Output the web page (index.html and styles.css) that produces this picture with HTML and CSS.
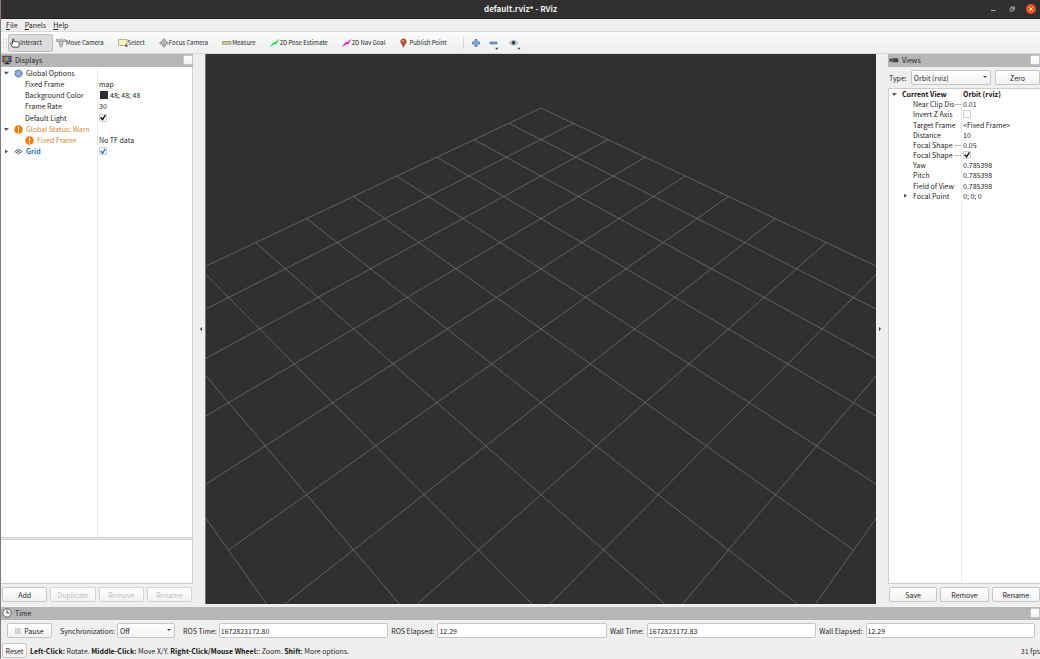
FILE: index.html
```html
<!DOCTYPE html>
<html lang="en">
<head>
    <meta charset="UTF-8">
    <meta name="viewport" content="width=device-width, initial-scale=1.0">
    <title>default.rviz* - RViz</title>
    <link rel="stylesheet" href="styles.css">
</head>
<body>
    <header class="titlebar">
        <h1>default.rviz* - RViz</h1>
        <div class="window-buttons">
            <button type="button" aria-label="Minimize"><svg width="10" height="10" viewBox="0 0 10 10"><path d="M3 6.500h4.500" stroke="#ccc" stroke-width=".8"/></svg></button>
            <button type="button" aria-label="Restore"><svg width="10" height="10" viewBox="0 0 10 10" fill="none" stroke="#bbb" stroke-width=".8"><path d="M3.200 4h3v3h-3zM4.300 4V2.800h3.100v3H6.200"/></svg></button>
            <button type="button" class="close" aria-label="Close"><svg width="10" height="10" viewBox="0 0 10 10"><path d="M3.200 3.200l3.600 3.600M6.800 3.200L3.200 6.800" stroke="#fff" stroke-width=".9"/></svg></button>
        </div>
    </header>

    <nav class="menubar">
        <a href="#"><u>F</u>ile</a>
        <a href="#"><u>P</u>anels</a>
        <a href="#"><u>H</u>elp</a>
    </nav>

    <div class="toolbar">
        <span class="grip"></span>
        <button type="button" class="tool active"><svg width="10" height="10" viewBox="0 0 10 10"><path d="M2.600 9.200L.6 5.500l.8-.6 1.200 1V1.200q.7-.9 1.300 0v2.600q.8-.7 1.400 0 .8-.6 1.400.1.900-.6 1.400.2.800-.2 1 .5v3.100l-.6 1.500z" fill="#fff" stroke="#222" stroke-width=".8"/></svg>Interact</button>
        <button type="button" class="tool"><svg width="10" height="10" viewBox="0 0 10 10"><g fill="#d8d8d8" stroke="#777" stroke-width=".6"><path d="M.3 1.500h2v2h-2zM7.700 1.500h2v2h-2zM3.400 2l1.600-1.600L6.600 2v1.300H3.400zM3.600 6.600h2.800V8L5 9.600 3.600 8zM2.200 3.500l1.200 2M7.800 3.500l-1.200 2"/><circle cx="5" cy="4.800" r="1.700"/></g></svg>Move Camera</button>
        <button type="button" class="tool"><svg width="10" height="10" viewBox="0 0 10 10"><path d="M.5 1.500h8.500v6H.5z" fill="#fbf6b4" stroke="#555" stroke-width=".7" stroke-dasharray="1 .7"/><path d="M7.500 6L10 8.500H7.500z" fill="#111"/></svg>Select</button>
        <button type="button" class="tool"><svg width="10" height="10" viewBox="0 0 10 10"><g fill="#ddd" stroke="#777" stroke-width=".7"><path d="M5 .5l1.600 1.800H3.400zM5 9.500l1.600-1.800H3.400zM.5 5l1.800-1.600v3.200zM9.500 5L7.700 3.400v3.200z"/><circle cx="5" cy="5" r="2.300"/></g><circle cx="5" cy="5" r=".9" fill="#888"/></svg>Focus Camera</button>
        <button type="button" class="tool"><svg width="10" height="10" viewBox="0 0 10 10"><path d="M.5 3.500h8.500v2.800H.5z" fill="#e0d29a" stroke="#8c8468" stroke-width=".7"/><path d="M2 3.500v1.200M3.500 3.500v1.200M5 3.500v1.200M6.500 3.500v1.200M8 3.500v1.200" stroke="#888" stroke-width=".4"/></svg>Measure</button>
        <button type="button" class="tool"><svg width="10" height="10" viewBox="0 0 10 10"><path d="M.2 8.500L3.400 4.700l1.800-.2L9 1.200 6.200 5.900l-1.800.2z" fill="#12d63c" stroke="#12d63c" stroke-width=".3"/></svg>2D Pose Estimate</button>
        <button type="button" class="tool"><svg width="10" height="10" viewBox="0 0 10 10"><path d="M.2 8.500L3.400 4.700l1.800-.2L9 1.200 6.200 5.900l-1.800.2z" fill="#e000cf" stroke="#e000cf" stroke-width=".3"/></svg>2D Nav Goal</button>
        <button type="button" class="tool"><svg width="10" height="10" viewBox="0 0 10 10"><path d="M4.200 9.600Q3.700 7 2 5.200A3 3 0 1 1 7 5.200Q5 7 4.800 9.600z" fill="#b5482e"/><circle cx="4.200" cy="3" r="1.100" fill="#eba58e"/></svg>Publish Point</button>
        <span class="separator"></span>
        <button type="button" class="icon-tool" aria-label="Add tool"><svg width="10" height="10" viewBox="0 0 10 10"><path d="M3.900 1.500h2.200v2.400h2.400v2.200H6.100v2.400H3.900V6.100H1.500V3.900h2.400z" fill="#88acd8" stroke="#3d6da8" stroke-width=".7"/></svg></button>
        <button type="button" class="icon-tool" aria-label="Remove tool"><svg width="14" height="14" viewBox="0 0 14 14"><path d="M3 6h7v2H3z" fill="#88acd8" stroke="#3d6da8" stroke-width=".7"/><path d="M8 11.800h3.400L9.700 13.700z" fill="#444"/></svg></button>
        <button type="button" class="icon-tool" aria-label="Tool visibility"><svg width="14" height="14" viewBox="0 0 14 14"><path d="M2 7q4.500-5 9 0-4.500 4-9 0z" fill="#e4e4e4" stroke="#888" stroke-width=".6"/><circle cx="6.500" cy="6.700" r="2" fill="#4a5888"/><circle cx="6.500" cy="6.700" r=".8" fill="#111"/><path d="M10.200 11.800h3.400l-1.700 1.900z" fill="#444"/></svg></button>
    </div>

    <main class="workspace">
        <section class="dock displays">
            <h2 class="dock-title"><svg width="10" height="10" viewBox="0 0 10 10"><path d="M.5 .8h9v6.500h-9z" fill="#333"/><path d="M1.400 1.600h2.400v4.800H1.400z" fill="#c66"/><path d="M3.800 1.600h2.400v4.800H3.800z" fill="#5bb26b"/><path d="M6.200 1.600h2.400v4.800H6.200z" fill="#66b"/><path d="M4 7.300h2v1h2v1H2v-1h2z" fill="#222"/></svg>Displays<button type="button" class="dock-close" aria-label="Close displays"></button></h2>
            <div class="tree">
                <table class="properties">
                    <tr><th><span class="arrow open"></span><svg class="row-icon" width="9" height="9" viewBox="0 0 9 9"><circle cx="4.500" cy="4.500" r="3.300" fill="#8fb3dc" stroke="#3f74b0" stroke-width="1.400" stroke-dasharray="1.300 .6"/><circle cx="4.500" cy="4.500" r="1.200" fill="#dfeaf6" stroke="#3f74b0" stroke-width=".5"/></svg>Global Options</th><td></td></tr>
                    <tr><th class="child">Fixed Frame</th><td>map</td></tr>
                    <tr><th class="child">Background Color</th><td><span class="swatch"></span>48; 48; 48</td></tr>
                    <tr><th class="child">Frame Rate</th><td>30</td></tr>
                    <tr><th class="child"><label for="light">Default Light</label></th><td><input type="checkbox" id="light" checked></td></tr>
                    <tr class="warn"><th><span class="arrow open"></span><svg class="row-icon" width="9" height="9" viewBox="0 0 9 9"><circle cx="4.500" cy="4.500" r="4.300" fill="#f07d12"/><path d="M4.500 1.700v3.500M4.500 6.200v1.200" stroke="#fff" stroke-width="1.100"/></svg>Global Status: Warn</th><td></td></tr>
                    <tr class="warn"><th class="child"><svg class="row-icon" width="9" height="9" viewBox="0 0 9 9"><circle cx="4.500" cy="4.500" r="4.300" fill="#f07d12"/><path d="M4.500 1.700v3.500M4.500 6.200v1.200" stroke="#fff" stroke-width="1.100"/></svg>Fixed Frame</th><td>No TF data</td></tr>
                    <tr class="enabled"><th><span class="arrow"></span><svg class="row-icon" width="9" height="9" viewBox="0 0 9 9"><path d="M.8 4.500l3.700-2.300 3.700 2.300-3.700 2.300zM2.600 3.300l3.700 2.300M6.400 3.300L2.700 5.700" fill="none" stroke="#555" stroke-width=".8"/></svg><label for="grid">Grid</label></th><td><input type="checkbox" id="grid" checked></td></tr>
                </table>
            </div>
            <div class="description"></div>
            <div class="buttons">
                <button type="button">Add</button>
                <button type="button" disabled>Duplicate</button>
                <button type="button" disabled>Remove</button>
                <button type="button" disabled>Rename</button>
            </div>
        </section>

        <button type="button" class="collapse left" aria-label="Hide left dock"></button>

        <!-- 10x10 ground grid, origin in the middle of the view -->
        <svg class="view" viewBox="-335 -275 670 550" preserveAspectRatio="xMidYMid slice">
            <g id="lines" fill="none" stroke="#a0a0a4" stroke-opacity=".44" stroke-width="1">
                <path d="M0 663L-469 0M85.200 542.200L-401.700-31.600M156.200 441.800L-340.800-60.200M216.300 356.800L-285.200-86.400"/>
                <path d="M267.800 284L-234.300-110.500M312.400 220.900L-187.400-132.600M351.500 165.700L-144.200-152.900M385.900 116.900L-104.100-171.800"/>
                <path d="M416.500 73.600L-66.900-189.300M443.900 34.900L-32.300-205.700M468.600 0L0-220.900"/>
            </g>
            <use href="#lines" transform="scale(-1 1)"/>
        </svg>

        <button type="button" class="collapse right" aria-label="Hide right dock"></button>

        <section class="dock views">
            <h2 class="dock-title"><svg width="10" height="10" viewBox="0 0 10 10"><path d="M.5 3.200l2.300 1.100V3.200H8.500q.8 0 .8.800v2.400q0 .8-.8.800H2.800V6.100L.5 7.200z" fill="#444"/><path d="M4 3.200v4" stroke="#888" stroke-width=".5"/></svg>Views<button type="button" class="dock-close" aria-label="Close views"></button></h2>
            <div class="view-type">
                <label for="type">Type:</label>
                <span class="combo"><select id="type"><option>Orbit (rviz)</option></select></span>
                <button type="button">Zero</button>
            </div>
            <div class="tree">
                <table class="properties">
                    <tr class="current"><th><span class="arrow open"></span>Current View</th><td>Orbit (rviz)</td></tr>
                    <tr><th class="child" lang="ja">Near Clip Dis…</th><td>0.01</td></tr>
                    <tr><th class="child"><label for="invert">Invert Z Axis</label></th><td><input type="checkbox" id="invert"></td></tr>
                    <tr><th class="child">Target Frame</th><td>&lt;Fixed Frame&gt;</td></tr>
                    <tr><th class="child">Distance</th><td>10</td></tr>
                    <tr><th class="child" lang="ja">Focal Shape …</th><td>0.05</td></tr>
                    <tr><th class="child" lang="ja"><label for="shape">Focal Shape …</label></th><td><input type="checkbox" id="shape" checked></td></tr>
                    <tr><th class="child">Yaw</th><td>0.785398</td></tr>
                    <tr><th class="child">Pitch</th><td>0.785398</td></tr>
                    <tr><th class="child">Field of View</th><td>0.785398</td></tr>
                    <tr><th class="parent"><span class="arrow"></span>Focal Point</th><td>0; 0; 0</td></tr>
                </table>
            </div>
            <div class="buttons">
                <button type="button">Save</button>
                <button type="button">Remove</button>
                <button type="button">Rename</button>
            </div>
        </section>
    </main>

    <section class="time">
        <h2 class="dock-title"><svg width="10" height="10" viewBox="0 0 10 10"><circle cx="5" cy="5" r="4.200" fill="#f4f4f4" stroke="#444" stroke-width=".8"/><path d="M5 2.200V5h2.300" fill="none" stroke="#222" stroke-width=".8"/></svg>Time<button type="button" class="dock-close" aria-label="Close time"></button></h2>
        <div class="time-row">
            <button type="button" class="pause"><svg width="6" height="6" viewBox="0 0 6 6" fill="#eee" stroke="#999" stroke-width=".5"><path d="M.5 .5h1.700v5H.5zM3.500 .5h1.700v5H3.500z"/></svg>Pause</button>
            <label for="sync" class="sync-label">Synchronization:</label>
            <span class="combo sync"><select id="sync"><option>Off</option></select></span>
            <label for="ros-time" class="first">ROS Time:</label>
            <input type="text" id="ros-time" value="1672823172.80">
            <label for="ros-elapsed">ROS Elapsed:</label>
            <input type="text" id="ros-elapsed" value="12.29">
            <label for="wall-time">Wall Time:</label>
            <input type="text" id="wall-time" value="1672823172.83">
            <label for="wall-elapsed">Wall Elapsed:</label>
            <input type="text" id="wall-elapsed" value="12.29">
        </div>
    </section>

    <footer class="statusbar">
        <button type="button">Reset</button>
        <p><b>Left-Click:</b> Rotate. <b>Middle-Click:</b> Move X/Y. <b>Right-Click/Mouse Wheel:</b>: Zoom. <b>Shift</b>: More options.</p>
        <span class="fps">31 fps</span>
    </footer>
</body>
</html>
```
FILE: styles.css
```css
* {
    box-sizing: border-box;
}
body {
    margin: 0;
    height: 100vh;
    display: flex;
    flex-direction: column;
    overflow: hidden;
    background-color: #efefef;
    border-left: 1px solid #85777c;
    color: #252525;
    font-family: "Noto Sans CJK JP", "Noto Sans", sans-serif;
    font-size: 7px;
    line-height: 10px;
}
button, input, select {
    font: inherit;
    color: inherit;
    margin: 0;
    padding: 0;
}
button {
    background: linear-gradient(#fff, #f1f1f1);
    border: 1px solid #c6c6c6;
    border-radius: 2px;
    height: 15px;
    white-space: nowrap;
}
button:disabled {
    color: #bebebe;
    border-color: #d4d4d4;
}
svg {
    display: block;
    flex: none;
}

/* title bar */
.titlebar {
    flex: none;
    height: 19px;
    display: grid;
    grid-template-columns: 1fr auto 1fr;
    align-items: center;
    background-color: #322f30;
    border-bottom: 1px solid #232122;
    color: #eee;
}
.titlebar h1 {
    grid-column: 2;
    margin: 0;
    font-size: 8px;
}
.window-buttons {
    display: flex;
    justify-content: flex-end;
    gap: 9px;
    padding-right: 4px;
}
.window-buttons button {
    width: 10px;
    height: 10px;
    border: none;
    border-radius: 50%;
    background: none;
}
.window-buttons .close {
    background-color: #e95420;
}

/* menu and tools */
.menubar {
    flex: none;
    height: 13px;
    display: flex;
    align-items: center;
    gap: 7px;
    padding-left: 5px;
    border-bottom: 1px solid #dadada;
}
.menubar a {
    color: inherit;
    text-decoration: none;
}
.toolbar {
    flex: none;
    height: 22px;
    display: flex;
    align-items: center;
    gap: 1px;
    padding-left: 2px;
    background: linear-gradient(#fbfbfb, #efefef);
    border-bottom: 1px solid #d8d8d8;
    font-size: 6px;
}
.grip {
    width: 4px;
    height: 10px;
    border-left: 1px dotted #ccc;
    border-right: 1px dotted #ccc;
}
.tool, .icon-tool {
    display: flex;
    align-items: center;
    height: 18px;
    padding: 0 10px 0 1px;
    background: none;
    border-color: transparent;
}
.tool.active {
    background: #dcdcdc;
    border-color: #c0c0c0;
}
.icon-tool {
    padding: 0 2px 0 1px;
}
.separator {
    width: 1px;
    height: 12px;
    margin: 0 4px;
    background-color: #d4d4d4;
}

/* docks */
.workspace {
    flex: 1;
    min-height: 0;
    display: flex;
    padding-bottom: 3px;
}
.dock {
    display: flex;
    flex-direction: column;
}
.displays {
    width: 192px;
}
.views {
    width: 152px;
}
.dock-title {
    flex: none;
    height: 13px;
    margin: 0;
    display: flex;
    align-items: center;
    gap: 3px;
    padding: 0 0 1px 1px;
    background-color: #b6b6b6;
    font-size: 7px;
    font-weight: normal;
}
.dock-close {
    width: 10px;
    height: 10px;
    margin-left: auto;
    border-radius: 1px;
}
.tree {
    flex: 1;
    min-height: 0;
    border: 1px solid #cdcdcd;
    border-width: 0 1px 1px 0;
    background: linear-gradient(#ececec, #ececec) 96px 0 / 1px 100% no-repeat #fff;
}
.views .tree {
    border-width: 1px 0 1px 1px;
    background-position-x: 72px;
}
.properties {
    width: 100%;
    height: 90px;
    table-layout: fixed;
    border-collapse: collapse;
}
.views .properties {
    height: 112px;
}
.properties th, .properties td {
    padding: 0;
    height: 10px;
    text-align: left;
    font-weight: normal;
    white-space: nowrap;
    vertical-align: middle;
    line-height: 10px;
}
.properties th {
    width: 98px;
}
.views .properties th {
    width: 74px;
}
.properties .child {
    padding-left: 24px;
}
.properties .parent {
    padding-left: 11px;
}
.row-icon {
    display: inline-block;
    vertical-align: -2px;
    margin-right: 3px;
}
.arrow {
    display: inline-block;
    width: 13px;
    height: 8px;
    vertical-align: -1px;
    background-color: #555;
    clip-path: polygon(4px 2px, 7px 4px, 4px 6px);
}
.arrow.open {
    clip-path: polygon(3px 3px, 8px 3px, 5px 6px);
}
.warn th {
    color: #d08a35;
}
.enabled th {
    color: #2f74c0;
    font-weight: bold;
}
.properties .current th, .properties .current td {
    font-weight: bold;
    color: #111;
}
.swatch {
    display: inline-block;
    width: 8px;
    height: 8px;
    margin: 0 2px 0 1px;
    vertical-align: -1px;
    background-color: #303030;
}
input[type="checkbox"] {
    appearance: none;
    display: block;
    width: 8px;
    height: 8px;
    background-color: #fff;
    border: 1px solid #ccc;
    border-radius: 1px;
}
input[type="checkbox"]:checked::before {
    content: "";
    display: block;
    width: 6px;
    height: 6px;
    background-color: #111;
    clip-path: polygon(0 50%, 20% 35%, 40% 60%, 80% 0, 100% 10%, 45% 100%);
}
.enabled input[type="checkbox"]:checked::before {
    background-color: #2f74c0;
}
.description {
    flex: none;
    height: 45px;
    margin-top: 1px;
    background-color: #fff;
    border: 1px solid #cdcdcd;
    border-left: none;
}
.buttons {
    flex: none;
    display: flex;
    gap: 3px;
    padding: 3px 1px 2px;
}
.buttons button {
    flex: 1;
}
.views .buttons {
    padding-right: 0;
}
.view-type {
    flex: none;
    display: flex;
    align-items: center;
    gap: 4px;
    padding: 3px 0 3px 1px;
}
.view-type .combo {
    flex: 1;
}
.view-type button {
    width: 45px;
}
.combo {
    position: relative;
    display: block;
}
.combo select {
    appearance: none;
    display: block;
    width: 100%;
    height: 15px;
    padding-left: 2px;
    border: 1px solid #c6c6c6;
    border-radius: 2px;
    background: linear-gradient(#fff, #f1f1f1);
}
.combo::after {
    content: "";
    position: absolute;
    right: 4px;
    top: 6px;
    border: 2px solid transparent;
    border-top-color: #444;
    border-bottom: none;
    pointer-events: none;
}

/* dock collapse strips */
.collapse {
    width: 12px;
    height: auto;
    border: none;
    border-radius: 0;
    background: none;
    display: flex;
    align-items: center;
}
.collapse::before {
    content: "";
    border: 2px solid transparent;
}
.collapse.left {
    justify-content: flex-end;
    padding-right: 3px;
}
.collapse.left::before {
    border-right-color: #333;
    border-left: none;
}
.collapse.right {
    padding-left: 3px;
}
.collapse.right::before {
    border-left-color: #333;
    border-right: none;
}
.view {
    flex: 1;
    min-width: 0;
    height: 100%;
    background-color: #303030;
    border-left: 1px solid #777;
}

/* time panel */
.time {
    flex: none;
}
.time-row {
    display: flex;
    align-items: center;
    padding: 3px 5px 5px 6px;
}
.time-row label {
    padding: 0 3px;
    white-space: nowrap;
}
.time-row .sync-label, .time-row .first {
    padding: 0 2px 0 8px;
}
.pause {
    width: 45px;
    display: flex;
    align-items: center;
    justify-content: center;
    gap: 3px;
}
.sync {
    width: 58px;
}
.time-row input {
    flex: 1;
    min-width: 0;
    height: 15px;
    padding-left: 1px;
    border: 1px solid #c6c6c6;
    border-radius: 2px;
    background-color: #fff;
}
.statusbar {
    flex: none;
    display: flex;
    align-items: center;
    padding: 0 0 1px 1px;
}
.statusbar button {
    width: 25px;
}
.statusbar p {
    margin: 0 0 0 3px;
}
.statusbar b {
    color: #111;
}
.fps {
    margin-left: auto;
}
```
